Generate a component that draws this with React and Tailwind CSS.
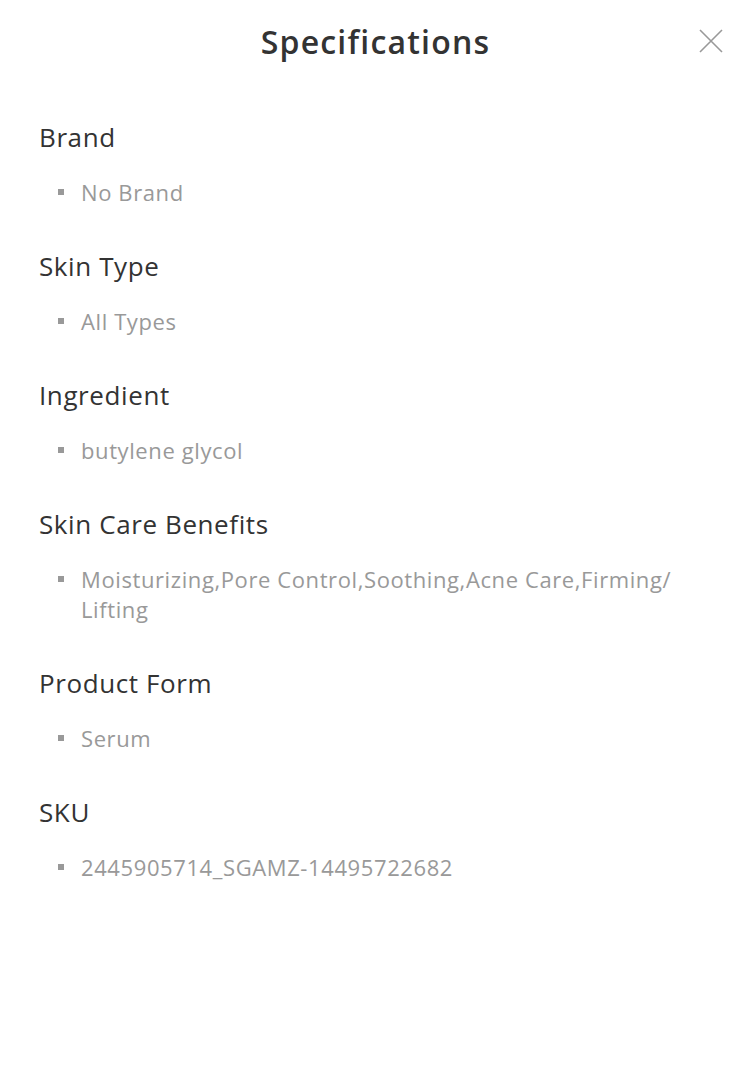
import React from 'react';

const specs = [
  { label: 'Brand', values: ['No Brand'] },
  { label: 'Skin Type', values: ['All Types'] },
  { label: 'Ingredient', values: ['butylene glycol'] },
  { label: 'Skin Care Benefits', values: [['Moisturizing,Pore Control,Soothing,Acne Care,Firming/', 'Lifting']] },
  { label: 'Product Form', values: ['Serum'] },
  { label: 'SKU', values: ['2445905714_SGAMZ-14495722682'] },
];

const App = () => {
  return (
    <div className="min-h-screen w-full bg-white font-['Open_Sans',sans-serif]">
      {/* header */}
      <div className="relative flex h-[84px] items-center justify-center">
        <h1 className="text-[32px] font-semibold tracking-[1.2px] text-[#333]">Specifications</h1>
        <button className="absolute right-[28px] top-[29px] text-[#999]">
          <svg width="24" height="24" viewBox="0 0 24 24" fill="none" stroke="currentColor" strokeWidth="1.6">
            <path d="M1 1L23 23M23 1L1 23" />
          </svg>
        </button>
      </div>

      {/* list */}
      <div className="flex flex-col gap-[41px] px-[39px] pt-[35px]">
        {specs.map((s) => (
          <div key={s.label} className="flex flex-col gap-[22px]">
            <h2 className="text-[26px] leading-[36px] tracking-[0.6px] text-[#333]">{s.label}</h2>
            <ul className="flex flex-col">
              {s.values.map((v, i) => (
                <li key={i} className="flex items-start pl-[19px] pr-[20px]">
                  <span className="mt-[12px] mr-[17px] h-[6px] w-[6px] shrink-0 bg-[#999]" />
                  <span className="text-[22px] leading-[30px] tracking-[0.6px] text-[#999]">
                    {Array.isArray(v) ? (
                      <>
                        {v[0]}
                        <wbr />
                        {v[1]}
                      </>
                    ) : (
                      v
                    )}
                  </span>
                </li>
              ))}
            </ul>
          </div>
        ))}
      </div>
    </div>
  );
};

export default App;
